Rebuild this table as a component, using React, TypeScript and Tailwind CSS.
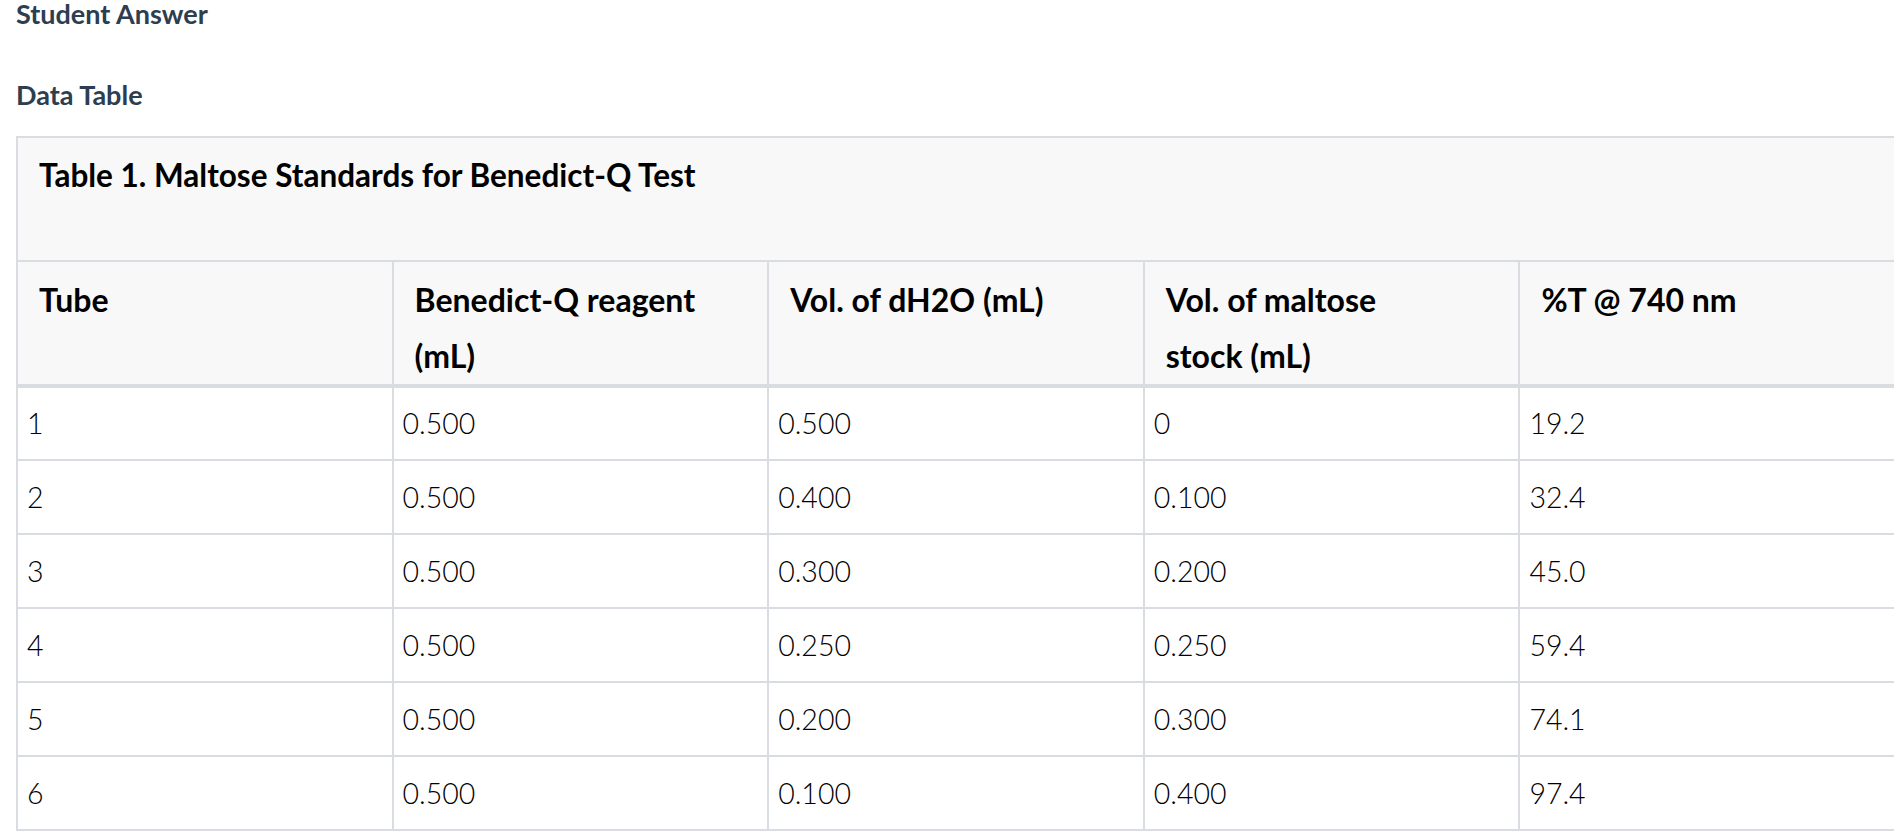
const rows = [
  ["1", "0.500", "0.500", "0", "19.2"],
  ["2", "0.500", "0.400", "0.100", "32.4"],
  ["3", "0.500", "0.300", "0.200", "45.0"],
  ["4", "0.500", "0.250", "0.250", "59.4"],
  ["5", "0.500", "0.200", "0.300", "74.1"],
  ["6", "0.500", "0.100", "0.400", "97.4"],
];

// header labels, one entry per visual line
const headers = [
  ["Tube"],
  ["Benedict-Q reagent", "(mL)"],
  ["Vol. of dH2O (mL)"],
  ["Vol. of maltose", "stock (mL)"],
  ["%T @ 740 nm"],
];

export default function App() {
  return (
    <div className="w-[1894px] h-[837px] overflow-hidden bg-white font-['Lato',sans-serif]">
      <div className="pl-[16px]">
        <h2 className="text-[27px] leading-[27px] font-bold text-[#2c3e50]">Student Answer</h2>
        <h3 className="mt-[53px] text-[27px] leading-[30px] font-bold text-[#2c3e50]">Data Table</h3>

        <table className="mt-[26px] w-[1880px] table-fixed border-collapse text-black">
          <caption className="h-[124px] border-2 border-b-0 border-[#d9dce1] bg-[#f8f8f8] px-[21px] pt-[17px] text-left align-top text-[31.5px] leading-[40px] font-bold">
            Table 1. Maltose Standards for Benedict-Q Test
          </caption>
          <thead>
            <tr className="bg-[#f8f8f8]">
              {headers.map((h) => (
                <th
                  key={h[0]}
                  className="h-[123px] border-2 border-b-4 border-[#d9dce1] px-[21px] pt-[10px] pb-0 text-left align-top text-[32px] leading-[56px] font-bold"
                >
                  {h.map((line) => (
                    <div key={line}>{line}</div>
                  ))}
                </th>
              ))}
            </tr>
          </thead>
          <tbody>
            {rows.map((r) => (
              <tr key={r[0]}>
                {r.map((c, i) => (
                  <td
                    key={i}
                    className="h-[74px] border-2 border-[#d9dce1] px-[9px] align-middle text-[28.5px] font-light"
                  >
                    {c}
                  </td>
                ))}
              </tr>
            ))}
          </tbody>
        </table>
      </div>
    </div>
  );
}
